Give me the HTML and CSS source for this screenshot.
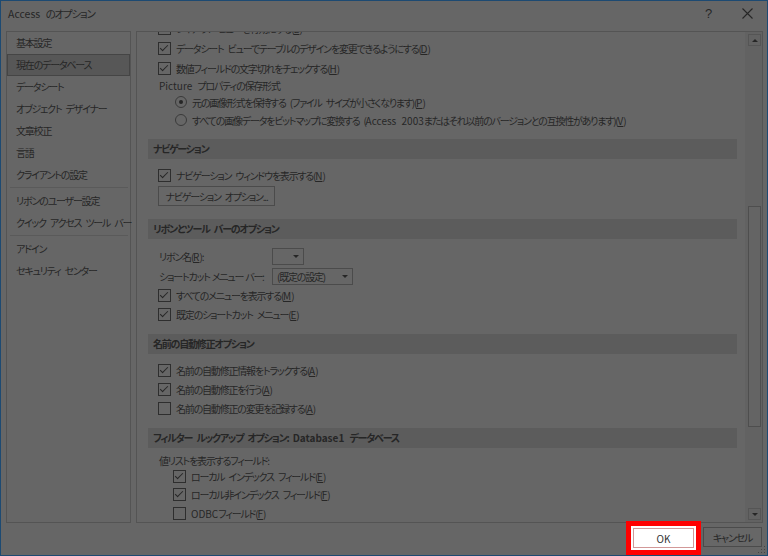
FILE: index.html
```html
<!DOCTYPE html>
<html lang="ja">
<head>
    <meta charset="UTF-8">
    <title>Access のオプション</title>
    <link rel="stylesheet" href="styles.css">
</head>
<body>

<div class="window">
    <div class="titlebar">
        <span class="title"><span class="en">Access </span>のオプション</span>
        <span class="help">?</span>
        <span class="close">
            <svg width="11" height="11" viewBox="0 0 11 11"><path d="M0.5 0.5 L10.5 10.5 M10.5 0.5 L0.5 10.5" stroke="#262626" stroke-width="1.1" fill="none"/></svg>
        </span>
    </div>

    <div class="main">
        <ul class="nav">
            <li>基本設定</li>
            <li class="active">現在のデータベース</li>
            <li>データシート</li>
            <li>オブジェクト デザイナー</li>
            <li>文章校正</li>
            <li>言語</li>
            <li>クライアントの設定</li>
            <li class="sep"></li>
            <li>リボンのユーザー設定</li>
            <li>クイック アクセス ツール バー</li>
            <li class="sep"></li>
            <li>アドイン</li>
            <li>セキュリティ センター</li>
        </ul>

        <div class="pane">
            <div class="pane-scroll">
                <div class="pane-inner">
                    <div class="opt tall"><span class="cb on"></span>レイアウト ビューを有効にする(<u>E</u>)</div>
                    <div class="opt tall"><span class="cb on"></span>データシート ビューでテーブルのデザインを変更できるようにする(<u>D</u>)</div>
                    <div class="opt tall"><span class="cb on"></span>数値フィールドの文字切れをチェックする(<u>H</u>)</div>
                    <div class="label"><span class="en">Picture </span>プロパティの保存形式</div>
                    <div class="opt radio"><span class="rb on"></span>元の画像形式を保持する (ファイル サイズが小さくなります)(<u>P</u>)</div>
                    <div class="opt radio"><span class="rb"></span>すべての画像データをビットマップに変換する (<span class="en">Access 2003 </span>またはそれ以前のバージョンとの互換性があります)(<u>V</u>)</div>

                    <div class="section">ナビゲーション</div>
                    <div class="opt"><span class="cb on"></span>ナビゲーション ウィンドウを表示する(<u>N</u>)</div>
                    <button class="btn nav-btn">ナビゲーション オプション...</button>

                    <div class="section">リボンとツール バーのオプション</div>
                    <div class="field">
                        <span class="field-label">リボン名(<u>R</u>):</span>
                        <span class="combo small"><span class="arrow"></span></span>
                    </div>
                    <div class="field">
                        <span class="field-label">ショートカット メニュー バー:</span>
                        <span class="combo">(既定の設定)<span class="arrow"></span></span>
                    </div>
                    <div class="opt"><span class="cb on"></span>すべてのメニューを表示する(<u>M</u>)</div>
                    <div class="opt"><span class="cb on"></span>既定のショートカット メニュー(<u>E</u>)</div>

                    <div class="section">名前の自動修正オプション</div>
                    <div class="opt"><span class="cb on"></span>名前の自動修正情報をトラックする(<u>A</u>)</div>
                    <div class="opt"><span class="cb on"></span>名前の自動修正を行う(<u>A</u>)</div>
                    <div class="opt"><span class="cb"></span>名前の自動修正の変更を記録する(<u>A</u>)</div>

                    <div class="section">フィルター ルックアップ オプション: <span class="en">Database1 </span>データベース</div>
                    <div class="label short">値リストを表示するフィールド:</div>
                    <div class="opt sub"><span class="cb on"></span>ローカル インデックス フィールド(<u>E</u>)</div>
                    <div class="opt sub"><span class="cb on"></span>ローカル非インデックス フィールド(<u>F</u>)</div>
                    <div class="opt sub"><span class="cb"></span><span class="en">ODBC </span>フィールド(<u>F</u>)</div>
                    <div class="opt sub"><span class="cb on"></span>サーバーの生成したデータ</div>
                </div>
            </div>
            <div class="scrollbar">
                <div class="sb-btn"><span class="arrow up"></span></div>
                <div class="sb-track"><div class="sb-thumb"></div></div>
                <div class="sb-btn"><span class="arrow"></span></div>
            </div>
        </div>
    </div>

    <div class="footer">
        <div class="ok-frame"><button class="btn btn-ok">OK</button></div>
        <button class="btn btn-cancel">キャンセル</button>
    </div>

    <svg class="grip" width="8" height="8" viewBox="0 0 8 8">
        <rect x="6" y="0" width="1" height="1" fill="#444"/>
        <rect x="3" y="3" width="1" height="1" fill="#444"/>
        <rect x="6" y="3" width="1" height="1" fill="#444"/>
        <rect x="0" y="6" width="1" height="1" fill="#444"/>
        <rect x="3" y="6" width="1" height="1" fill="#444"/>
        <rect x="6" y="6" width="1" height="1" fill="#444"/>
    </svg>
</div>

</body>
</html>
```

FILE: styles.css
```css
body {
    margin: 0;
    font-family: "Noto Sans CJK JP", "Noto Sans", sans-serif;
    font-size: 10px;
    letter-spacing: -1.2px;
    word-spacing: 3px;
    font-feature-settings: "palt";
    color: #262626;
    background-color: #666;
}
.en, u {
    letter-spacing: 0;
}
.window {
    position: relative;
    width: 768px;
    height: 556px;
    box-sizing: border-box;
    border: 1px solid #1d4a72;
    background-color: #666;
    display: flex;
    flex-direction: column;
}
.titlebar {
    height: 26px;
    display: flex;
    align-items: center;
    padding-left: 7px;
}
.title {
    flex: 1;
    line-height: 22px;
    font-size: 10.5px;
}
.help {
    width: 14px;
    margin-right: 23px;
    font-family: "Liberation Sans", sans-serif;
    font-size: 13px;
    letter-spacing: 0;
}
.close {
    width: 11px;
    height: 11px;
    margin-right: 14px;
    display: flex;
}
.main {
    display: flex;
    gap: 5px;
    height: 492px;
    padding: 5px 4px 0 5px;
}
.nav {
    width: 125px;
    box-sizing: border-box;
    margin: 0;
    padding: 0;
    list-style: none;
    border: 1px solid #545454;
}
.nav li {
    height: 22px;
    line-height: 22px;
    padding-left: 9px;
    box-sizing: border-box;
    white-space: nowrap;
}
.nav li.active {
    background-color: #575757;
    border: 1px solid #454545;
    padding-left: 8px;
    line-height: 20px;
}
.nav li.sep {
    height: 0;
    margin: 1px 2px 2px 3px;
    border-top: 1px solid #5a5a5a;
}
.pane {
    width: 627px;
    box-sizing: border-box;
    border: 1px solid #545454;
    display: flex;
}
.pane-scroll {
    flex: 1;
    overflow: hidden;
    padding: 0 8px 0 11px;
}
.pane-inner {
    margin-top: -14px;
}
.opt {
    height: 19px;
    line-height: 19px;
    display: flex;
    align-items: center;
    padding-left: 10px;
    white-space: nowrap;
}
.opt.tall {
    height: 20px;
}
.opt.radio {
    height: 18px;
    padding-left: 27px;
}
.opt.sub {
    padding-left: 25px;
    height: 18.5px;
}
.cb {
    position: relative;
    width: 11px;
    height: 11px;
    border: 1px solid #2e2e2e;
    margin-right: 5px;
    flex: none;
}
.cb.on::after {
    content: "";
    position: absolute;
    left: 3px;
    top: 0;
    width: 3px;
    height: 7px;
    border: solid #262626;
    border-width: 0 1.3px 1.3px 0;
    transform: rotate(45deg);
}
.rb {
    position: relative;
    width: 10px;
    height: 10px;
    border: 1px solid #3a3a3a;
    border-radius: 50%;
    margin-right: 5px;
    flex: none;
}
.rb.on::after {
    content: "";
    position: absolute;
    left: 3px;
    top: 3px;
    width: 4px;
    height: 4px;
    border-radius: 50%;
    background-color: #262626;
}
.label {
    height: 15px;
    line-height: 15px;
    padding-left: 11px;
}
.label.short {
    height: 12px;
    line-height: 12px;
}
.section {
    height: 20px;
    line-height: 20px;
    margin: 10px 0 7px;
    padding-left: 5px;
    background-color: #5c5c5c;
    font-weight: bold;
}
.btn {
    font-family: inherit;
    font-size: inherit;
    letter-spacing: inherit;
    word-spacing: inherit;
    font-feature-settings: "palt";
    color: #262626;
    height: 20px;
    padding: 0;
    border: 1px solid #4b4b4b;
    background-color: #676767;
}
.nav-btn {
    display: block;
    width: 117px;
    margin: 1px 0 13px 10px;
}
.field {
    height: 20px;
    display: flex;
    align-items: center;
    padding-left: 11px;
    white-space: nowrap;
}
.field-label {
    width: 113px;
    flex: none;
    word-spacing: 1px;
}
.combo {
    position: relative;
    width: 81px;
    height: 17px;
    line-height: 15px;
    box-sizing: border-box;
    border: 1px solid #4b4b4b;
    padding-left: 4px;
}
.combo.small {
    width: 32px;
}
.combo .arrow {
    position: absolute;
    right: 4px;
    top: 6px;
}
.arrow {
    width: 0;
    height: 0;
    border-left: 3px solid transparent;
    border-right: 3px solid transparent;
    border-top: 3px solid #262626;
}
.arrow.up {
    border-top: 0;
    border-bottom: 3px solid #262626;
}
.scrollbar {
    width: 17px;
    box-sizing: border-box;
    padding: 2px 1px 2px 3px;
    background-color: #626262;
    display: flex;
    flex-direction: column;
}
.sb-btn {
    height: 12px;
    box-sizing: border-box;
    border: 1px solid #555;
    display: flex;
    align-items: center;
    justify-content: center;
}
.sb-track {
    flex: 1;
}
.sb-thumb {
    margin-top: 160px;
    height: 221px;
    box-sizing: border-box;
    border: 1px solid #4e4e4e;
    background-color: #646464;
}
.footer {
    flex: 1;
    display: flex;
    justify-content: flex-end;
    align-items: flex-start;
    padding-right: 5px;
}
.ok-frame {
    width: 75px;
    height: 34px;
    box-sizing: border-box;
    margin: -2px 2px 0 0;
    border: 5px solid #ff0000;
    padding: 2px;
    background-color: #fff;
}
.btn-ok {
    display: block;
    width: 61px;
    border-color: #d29898;
    background-color: #fff;
    color: #333;
    letter-spacing: 0;
}
.btn-cancel {
    width: 59px;
    margin-top: 4px;
}
.grip {
    position: absolute;
    right: 1px;
    bottom: 1px;
}
```
